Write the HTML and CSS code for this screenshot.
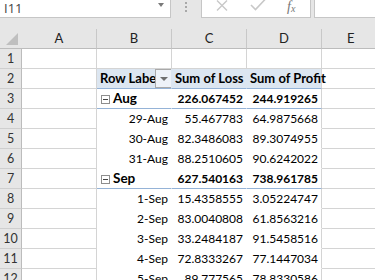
FILE: index.html
```html
<!DOCTYPE html>
<html>

<head>
    <meta charset='utf-8'>
    <title>Pivot table</title>
    <meta name='viewport' content='width=device-width, initial-scale=1'>
    <link rel="stylesheet" href="styles.css">
</head>

<body>
    <div class="formula_bar">
        <div class="name_box">
            <span class="name_txt">I11</span>
            <span class="name_arrow"></span>
        </div>
        <div class="grip"><span></span><span></span><span></span></div>
        <div class="btn_box">
            <svg class="ico" width="14" height="12" viewBox="0 0 14 12">
                <path d="M2 0.5 L12 10.5 M12 0.5 L2 10.5" stroke="#c8c8c8" stroke-width="1.4" fill="none" />
            </svg>
            <svg class="ico" width="16" height="12" viewBox="0 0 16 12">
                <path d="M1 6 L5.5 10.5 L15 0.5" stroke="#c8c8c8" stroke-width="1.6" fill="none" />
            </svg>
            <span class="fx"><i>f</i><sub>x</sub></span>
        </div>
        <div class="formula_input"></div>
    </div>

    <div class="sheet">
        <div class="row col_head">
            <div class="rh corner"><span class="tri"></span></div>
            <div class="ch">A</div>
            <div class="ch">B</div>
            <div class="ch">C</div>
            <div class="ch">D</div>
            <div class="ch last">E</div>
        </div>

        <div class="row">
            <div class="rh">1</div>
            <div class="cell"></div>
            <div class="cell"></div>
            <div class="cell"></div>
            <div class="cell"></div>
            <div class="cell last"></div>
        </div>

        <div class="row">
            <div class="rh">2</div>
            <div class="cell"></div>
            <div class="cell pv head label_cell">
                <span class="label_txt">Row Labels</span>
                <span class="filter_btn"><span></span></span>
            </div>
            <div class="cell pv head over">Sum of Loss</div>
            <div class="cell pv head pv_end over">Sum of Profit</div>
            <div class="cell last"></div>
        </div>

        <div class="row">
            <div class="rh">3</div>
            <div class="cell"></div>
            <div class="cell pv sub"><span class="minus"></span>Aug</div>
            <div class="cell pv sub num">226.067452</div>
            <div class="cell pv sub num pv_end">244.919265</div>
            <div class="cell last"></div>
        </div>

        <div class="row">
            <div class="rh">4</div>
            <div class="cell"></div>
            <div class="cell pv num">29-Aug</div>
            <div class="cell pv num">55.467783</div>
            <div class="cell pv num pv_end">64.9875668</div>
            <div class="cell last"></div>
        </div>

        <div class="row">
            <div class="rh">5</div>
            <div class="cell"></div>
            <div class="cell pv num">30-Aug</div>
            <div class="cell pv num">82.3486083</div>
            <div class="cell pv num pv_end">89.3074955</div>
            <div class="cell last"></div>
        </div>

        <div class="row">
            <div class="rh">6</div>
            <div class="cell"></div>
            <div class="cell pv num">31-Aug</div>
            <div class="cell pv num">88.2510605</div>
            <div class="cell pv num pv_end">90.6242022</div>
            <div class="cell last"></div>
        </div>

        <div class="row">
            <div class="rh">7</div>
            <div class="cell"></div>
            <div class="cell pv sub"><span class="minus"></span>Sep</div>
            <div class="cell pv sub num">627.540163</div>
            <div class="cell pv sub num pv_end">738.961785</div>
            <div class="cell last"></div>
        </div>

        <div class="row">
            <div class="rh">8</div>
            <div class="cell"></div>
            <div class="cell pv num">1-Sep</div>
            <div class="cell pv num">15.4358555</div>
            <div class="cell pv num pv_end">3.05224747</div>
            <div class="cell last"></div>
        </div>

        <div class="row">
            <div class="rh">9</div>
            <div class="cell"></div>
            <div class="cell pv num">2-Sep</div>
            <div class="cell pv num">83.0040808</div>
            <div class="cell pv num pv_end">61.8563216</div>
            <div class="cell last"></div>
        </div>

        <div class="row">
            <div class="rh">10</div>
            <div class="cell"></div>
            <div class="cell pv num">3-Sep</div>
            <div class="cell pv num">33.2484187</div>
            <div class="cell pv num pv_end">91.5458516</div>
            <div class="cell last"></div>
        </div>

        <div class="row">
            <div class="rh">11</div>
            <div class="cell"></div>
            <div class="cell pv num">4-Sep</div>
            <div class="cell pv num">72.8333267</div>
            <div class="cell pv num pv_end">77.1447034</div>
            <div class="cell last"></div>
        </div>

        <div class="row">
            <div class="rh">12</div>
            <div class="cell"></div>
            <div class="cell pv num">5-Sep</div>
            <div class="cell pv num">89.777565</div>
            <div class="cell pv num pv_end">78.8330586</div>
            <div class="cell last"></div>
        </div>
    </div>
</body>

</html>
```

FILE: styles.css
```css
* {
    margin: 0;
    padding: 0;
    box-sizing: border-box;
}

body {
    width: 375px;
    height: 280px;
    overflow: hidden;
    background-color: #e6e6e6;
    font-family: "Lato", "Open Sans", sans-serif;
    color: #000;
}

/* formula bar */
.formula_bar {
    display: flex;
    height: 29px;
    align-items: flex-start;
}

.name_box {
    display: flex;
    align-items: center;
    justify-content: space-between;
    width: 171px;
    height: 18px;
    background-color: white;
    border-right: 1px solid #c6c6c6;
    border-bottom: 1px solid #c6c6c6;
    padding: 0 6px 2px 4px;
}

.name_txt {
    font-family: "Open Sans", sans-serif;
    font-size: 13px;
    color: #444;
}

.name_arrow {
    width: 0;
    height: 0;
    border-left: 3.5px solid transparent;
    border-right: 3.5px solid transparent;
    border-top: 4px solid #7a7a7a;
    margin-bottom: 6px;
}

.grip {
    display: flex;
    flex-direction: column;
    gap: 2px;
    width: 30px;
    padding: 2px 0 0 14px;
}

.grip span {
    width: 2px;
    height: 2px;
    background-color: #a8a8a8;
}

.btn_box {
    display: flex;
    align-items: flex-start;
    width: 110px;
    height: 18px;
    background-color: white;
    border: 1px solid #c6c6c6;
    border-top: none;
    padding: 0 0 0 13px;
}

.ico {
    display: block;
    margin-right: 21px;
}

.ico+.ico {
    margin-top: -1px;
}

.fx {
    font-family: "Liberation Serif", serif;
    font-size: 14px;
    color: #777;
    line-height: 14px;
}

.fx sub {
    font-size: 10px;
    font-style: italic;
    vertical-align: -1px;
}

.formula_input {
    flex: 1;
    height: 18px;
    margin-left: 3px;
    background-color: white;
    border-left: 1px solid #c6c6c6;
    border-bottom: 1px solid #c6c6c6;
}

/* sheet grid */
.sheet {
    background-color: white;
}

.row {
    display: flex;
    height: 20px;
}

.rh {
    flex: none;
    width: 22px;
    background-color: #e6e6e6;
    border-right: 1px solid #bcbcbc;
    border-bottom: 1px solid #cfcfcf;
    font-size: 12.5px;
    line-height: 19px;
    text-align: center;
    color: #333;
}

.col_head {
    background-color: #e6e6e6;
}

.col_head .rh {
    border-right: none;
    border-bottom: 1px solid #bcbcbc;
    display: flex;
    align-items: flex-end;
    justify-content: flex-end;
    padding: 0 4px 3px 0;
}

.tri {
    width: 0;
    height: 0;
    border-left: 12px solid transparent;
    border-bottom: 12px solid #bfbfbf;
}

.ch {
    flex: none;
    width: 75px;
    border-left: 1px solid #c8c8c8;
    border-bottom: 1px solid #bcbcbc;
    font-size: 13px;
    line-height: 19px;
    text-align: center;
    color: #222;
}

.ch:nth-child(2) {
    width: 74px;
    border-left: none;
}

.ch.last {
    flex: 1;
    text-align: left;
    padding-left: 25px;
}

.cell {
    flex: none;
    width: 75px;
    border-right: 1px solid #d4d4d4;
    border-bottom: 1px solid #d4d4d4;
    font-size: 12px;
    line-height: 19px;
    padding: 0 3px;
    white-space: nowrap;
    overflow: hidden;
}

.cell.last {
    flex: 1;
    border-right: none;
}

/* pivot table */
.pv {
    border-right-color: transparent;
    border-bottom-color: transparent;
}

.pv_end {
    border-right-color: #d4d4d4;
}

.head {
    background-color: #dce6f1;
    border-bottom-color: #95b3d7;
    font-weight: bold;
    font-size: 13px;
}

.over {
    overflow: visible;
    position: relative;
    z-index: 1;
}

.sub {
    font-weight: bold;
    border-bottom-color: #95b3d7;
}

.sub:not(.num) {
    font-size: 13.5px;
}

.num {
    text-align: right;
}

.label_cell {
    display: flex;
    padding-right: 0;
}

.label_txt {
    flex: 1;
    overflow: hidden;
}

.filter_btn {
    display: flex;
    align-items: center;
    justify-content: center;
    width: 17px;
    height: 19px;
    margin-right: -1px;
    border: 1px solid #a9a9a9;
    background-color: #eef2f8;
}

.filter_btn span {
    width: 0;
    height: 0;
    border-left: 4px solid transparent;
    border-right: 4px solid transparent;
    border-top: 4px solid #6f6f6f;
}

.minus {
    display: inline-block;
    position: relative;
    width: 9px;
    height: 9px;
    margin: 0 3px 0 1px;
    border: 1px solid #8e8e8e;
    background-color: white;
    vertical-align: -1px;
}

.minus::after {
    content: "";
    position: absolute;
    left: 1px;
    top: 3px;
    width: 5px;
    height: 1px;
    background-color: #444;
}
```
